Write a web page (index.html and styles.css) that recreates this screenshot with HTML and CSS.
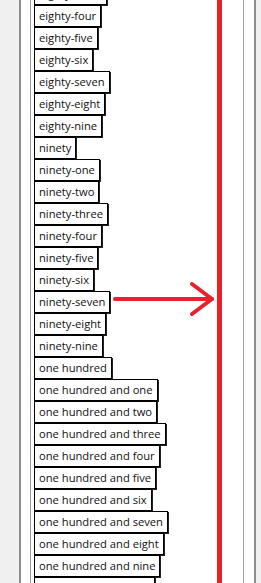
FILE: index.html
```html
<!DOCTYPE html>
<html>
<head>
<meta charset="utf-8">
<link rel="stylesheet" href="styles.css">
</head>
<body>
<div class="frame">
  <div class="list">
    <span class="item">eighty-three</span>
    <span class="item">eighty-four</span>
    <span class="item">eighty-five</span>
    <span class="item">eighty-six</span>
    <span class="item">eighty-seven</span>
    <span class="item">eighty-eight</span>
    <span class="item">eighty-nine</span>
    <span class="item">ninety</span>
    <span class="item">ninety-one</span>
    <span class="item">ninety-two</span>
    <span class="item">ninety-three</span>
    <span class="item">ninety-four</span>
    <span class="item">ninety-five</span>
    <span class="item">ninety-six</span>
    <span class="item">ninety-seven</span>
    <span class="item">ninety-eight</span>
    <span class="item">ninety-nine</span>
    <span class="item">one hundred</span>
    <span class="item">one hundred and one</span>
    <span class="item">one hundred and two</span>
    <span class="item">one hundred and three</span>
    <span class="item">one hundred and four</span>
    <span class="item">one hundred and five</span>
    <span class="item">one hundred and six</span>
    <span class="item">one hundred and seven</span>
    <span class="item">one hundred and eight</span>
    <span class="item">one hundred and nine</span>
    <span class="item">one hundred and ten</span>
  </div>
</div>
<svg class="overlay" width="261" height="583" viewBox="0 0 261 583">
  <line x1="219.5" y1="0" x2="219.5" y2="583" stroke="#e8212b" stroke-width="5"/>
  <line x1="115" y1="299" x2="212" y2="299" stroke="#e8212b" stroke-width="4" stroke-linecap="round"/>
  <polyline points="192,284 212,299 192,314" fill="none" stroke="#e8212b" stroke-width="4" stroke-linecap="round" stroke-linejoin="round"/>
</svg>
</body>
</html>
```
FILE: styles.css
```css
html, body {
  margin: 0;
  padding: 0;
  height: 583px;
  overflow: hidden;
  background: #f0f0f0;
}
.frame {
  margin-left: 19px;
  width: 214px;
  border-left: 2px solid #8c8c8c;
  border-right: 2px solid #8c8c8c;
  background: #ffffff;
  padding: 0 10px 0 9px;
  margin-top: -17px;
}
.list {
  border-left: 1px solid #a0a0a0;
  border-right: 1px solid #a0a0a0;
  background: #fff;
  padding: 0 3px;
  display: flex;
  flex-direction: column;
  align-items: flex-start;
  min-height: 700px;
}
.item {
  font-family: "Open Sans", "Noto Sans", sans-serif;
  font-size: 11.2px;
  line-height: 18px;
  color: #111;
  border: 1px solid #000;
  box-shadow: 1px 1px 0 #222;
  padding: 1px 4px 1px 4px;
  background: #fff;
}
.overlay {
  position: absolute;
  left: 0;
  top: 0;
}
```
